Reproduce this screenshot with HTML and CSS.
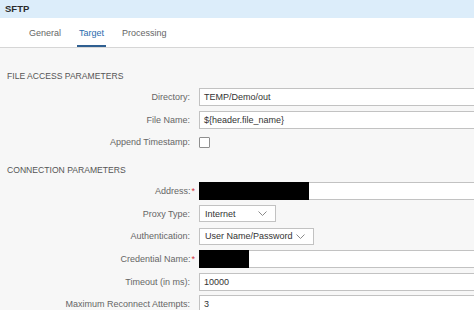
FILE: index.html
```html
<!DOCTYPE html>
<html lang="en">
  <head>
    <meta charset="UTF-8" />
    <title>SFTP</title>
    <link rel="stylesheet" href="styles.css">
  </head>
  <body>
    <div class="title">SFTP</div>
    <div class="tabs">
      <span class="tab">General</span>
      <span class="tab active">Target</span>
      <span class="tab">Processing</span>
    </div>
    <div class="content">
      <div class="heading">FILE ACCESS PARAMETERS</div>
      <div class="form">
        <label>Directory:</label>
        <div class="field">TEMP/Demo/out</div>
        <label>File Name:</label>
        <div class="field">${header.file_name}</div>
        <label>Append Timestamp:</label>
        <div class="check-cell"><span class="checkbox"></span></div>
      </div>

      <div class="heading second">CONNECTION PARAMETERS</div>
      <div class="form">
        <label>Address:<span class="req">*</span></label>
        <div class="field"><span class="redact wide"></span></div>
        <label>Proxy Type:</label>
        <div class="select-cell">
          <div class="select proxy">Internet
            <svg width="9" height="5" viewBox="0 0 9 5"><path d="M0.5 0.5 L4.5 4.5 L8.5 0.5" fill="none" stroke="#8a8a8a" stroke-width="1"/></svg>
          </div>
        </div>
        <label>Authentication:</label>
        <div class="select-cell">
          <div class="select auth">User Name/Password
            <svg width="9" height="5" viewBox="0 0 9 5"><path d="M0.5 0.5 L4.5 4.5 L8.5 0.5" fill="none" stroke="#8a8a8a" stroke-width="1"/></svg>
          </div>
        </div>
        <label>Credential Name:<span class="req">*</span></label>
        <div class="field"><span class="redact short"></span></div>
        <label>Timeout (in ms):</label>
        <div class="field">10000</div>
        <label>Maximum Reconnect Attempts:</label>
        <div class="field">3</div>
      </div>
    </div>
  </body>
</html>
```

FILE: styles.css
```css
body {
  margin: 0;
  overflow: hidden;
  font-family: "Liberation Sans", Arial, sans-serif;
  font-size: 9px;
  color: #333;
  background-color: #f7f7f7;
}

.title {
  height: 18px;
  line-height: 18px;
  padding-left: 5px;
  background-color: #dcedfa;
  font-weight: bold;
  font-size: 9.5px;
  color: #2b2b2b;
}

.tabs {
  display: flex;
  gap: 15px;
  height: 29px;
  padding-left: 28px;
  background-color: white;
  border-bottom: 1px solid #d6d6d6;
}

.tab {
  display: flex;
  align-items: center;
  padding: 2px 1px 0 1px;
  color: #666;
  font-size: 9px;
  border-bottom: 2px solid transparent;
}

.tab.active {
  color: #2a6cae;
  border-bottom-color: #2f5f91;
  padding: 2px 2px 0 2px;
}

.content {
  padding-top: 22px;
}

.heading {
  height: 12px;
  line-height: 12px;
  padding-left: 7px;
  margin-bottom: 6px;
  color: #555;
  font-size: 8.6px;
}

.heading.second {
  margin-top: 13px;
}

.form {
  display: grid;
  grid-template-columns: 190px 290px;
  column-gap: 9px;
  row-gap: 4.6px;
  grid-auto-rows: 18px;
}

label {
  display: flex;
  align-items: center;
  justify-content: flex-end;
  color: #666;
}

.req {
  color: #d0313b;
  margin-right: -5px;
  margin-left: 1px;
  align-self: flex-start;
  margin-top: 4px;
}

.field {
  display: flex;
  align-items: center;
  box-sizing: border-box;
  height: 18px;
  padding-left: 4px;
  background-color: white;
  border: 1px solid #c2c2c2;
  color: #333;
}

.redact {
  background-color: black;
  height: 18px;
  margin: 0 0 0 -5px;
}

.redact.wide {
  width: 110px;
}

.redact.short {
  width: 50px;
}

.check-cell,
.select-cell {
  display: flex;
  align-items: center;
}

.checkbox {
  width: 9px;
  height: 9px;
  border: 1px solid #8f8f8f;
  border-radius: 1px;
  background-color: white;
}

.select {
  display: flex;
  align-items: center;
  justify-content: space-between;
  box-sizing: border-box;
  height: 17px;
  padding: 0 8px 0 5px;
  background-color: white;
  border: 1px solid #c2c2c2;
  color: #333;
}

.select.proxy {
  width: 77px;
}

.select.auth {
  width: 115px;
}
```
